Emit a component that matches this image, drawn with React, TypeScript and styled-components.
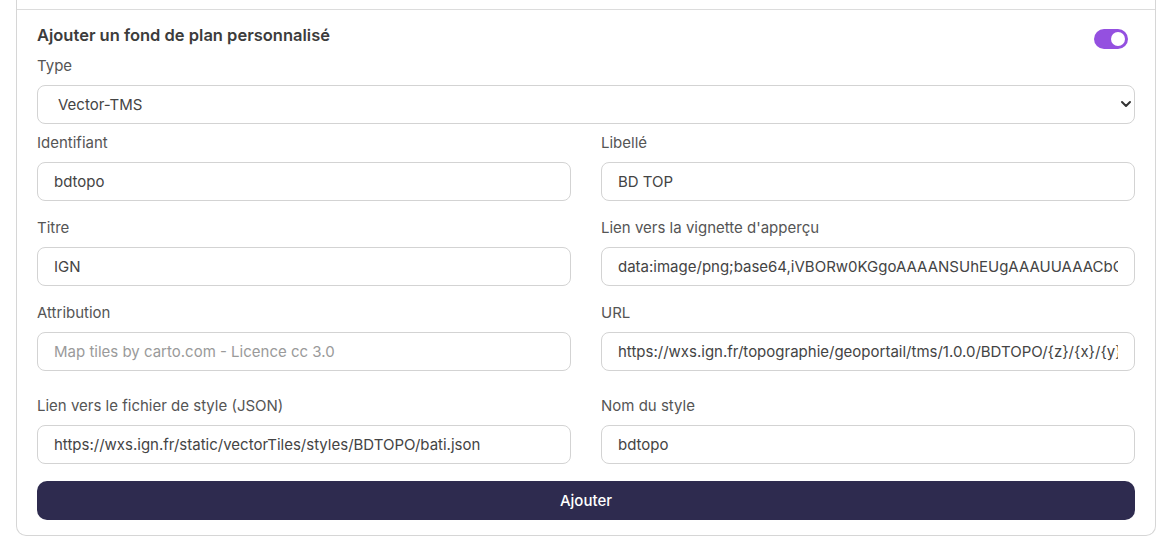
import React from 'react'
import styled, { createGlobalStyle } from 'styled-components'

const GlobalStyle = createGlobalStyle`
	html, body {
		margin: 0;
		padding: 0;
		background: #ffffff;
		font-family: Inter, 'Noto Sans', sans-serif;
	}
	* {
		box-sizing: border-box;
	}
`

const Page = styled.div`
	padding: 0 11px 10px 16px;
`

const Card = styled.div`
	border: 1px solid #d6d6d6;
	border-top: none;
	border-radius: 0 0 10px 10px;
`

const PreviousSection = styled.div`
	height: 10px;
	border-bottom: 1px solid #dcdcdc;
`

const Section = styled.form`
	padding: 14px 20px 15px 20px;
`

const Header = styled.div`
	display: flex;
	justify-content: space-between;
	align-items: flex-start;
	padding-right: 7px;
	margin-bottom: 6px;
`

const Title = styled.h2`
	margin: 0;
	font-size: 16.5px;
	font-weight: 600;
	color: #3c3c3c;
	line-height: 22px;
`

const Toggle = styled.button<{ $on: boolean }>`
	position: relative;
	width: 34px;
	height: 20px;
	border: none;
	border-radius: 10px;
	padding: 0;
	margin-top: 5px;
	background: ${p => (p.$on ? '#9450e0' : '#cccccc')};
	cursor: pointer;

	&::after {
		content: '';
		position: absolute;
		top: 3px;
		left: ${p => (p.$on ? '17px' : '3px')};
		width: 14px;
		height: 14px;
		border-radius: 50%;
		background: #ffffff;
	}
`

const Grid = styled.div`
	display: grid;
	grid-template-columns: 1fr 1fr;
	column-gap: 30px;
`

const Field = styled.div<{ $full?: boolean; $spaced?: boolean }>`
	display: flex;
	flex-direction: column;
	grid-column: ${p => (p.$full ? '1 / -1' : 'auto')};
	margin-top: ${p => (p.$spaced ? '8px' : '0')};
	margin-bottom: ${p => (p.$full ? '8px' : '16px')};
`

const Label = styled.label`
	font-size: 15px;
	line-height: 21px;
	color: #555555;
	margin-bottom: 9px;
`

const Input = styled.input`
	width: 100%;
	height: 39px;
	border: 1px solid #d3d3d3;
	border-radius: 8px;
	padding: 0 16px;
	font-family: inherit;
	font-size: 15px;
	color: #444444;
	background: #ffffff;
	outline: none;

	&::placeholder {
		color: #9a9a9a;
	}
`

const SelectWrap = styled.div`
	position: relative;
`

const Select = styled.select`
	width: 100%;
	height: 39px;
	border: 1px solid #d3d3d3;
	border-radius: 8px;
	padding: 0 20px;
	font-family: inherit;
	font-size: 15px;
	color: #444444;
	background: #ffffff;
	appearance: none;
	outline: none;
`

const Chevron = styled.svg`
	position: absolute;
	right: 3px;
	top: 14px;
	pointer-events: none;
`

const SubmitButton = styled.button`
	width: 100%;
	height: 39px;
	margin-top: 1px;
	border: none;
	border-radius: 10px;
	background: #2e2b4f;
	color: #ffffff;
	font-family: inherit;
	font-size: 15px;
	font-weight: 500;
	cursor: pointer;
`

const App = () => {
	const [enabled, setEnabled] = React.useState(true)

	return (
		<Page>
			<GlobalStyle />
			<Card>
				<PreviousSection />
				<Section onSubmit={event => event.preventDefault()}>
					<Header>
						<Title>Ajouter un fond de plan personnalisé</Title>
						<Toggle type='button' $on={enabled} onClick={() => setEnabled(!enabled)} />
					</Header>
					<Grid>
						<Field $full>
							<Label>Type</Label>
							<SelectWrap>
								<Select defaultValue='vector-tms'>
									<option value='wms'>WMS</option>
									<option value='wmts'>WMTS</option>
									<option value='tms'>TMS</option>
									<option value='vector-tms'>Vector-TMS</option>
								</Select>
								<Chevron width='12' height='10' viewBox='0 0 12 10'>
									<path d='M2 3 L6 7 L10 3' fill='none' stroke='#333' strokeWidth='2' strokeLinecap='round' strokeLinejoin='round' />
								</Chevron>
							</SelectWrap>
						</Field>
						<Field>
							<Label>Identifiant</Label>
							<Input defaultValue='bdtopo' />
						</Field>
						<Field>
							<Label>Libellé</Label>
							<Input defaultValue='BD TOP' />
						</Field>
						<Field>
							<Label>Titre</Label>
							<Input defaultValue='IGN' />
						</Field>
						<Field>
							<Label>Lien vers la vignette d'apperçu</Label>
							<Input defaultValue='data:image/png;base64,iVBORw0KGgoAAAANSUhEUgAAAUUAAACbCAYAAAD' />
						</Field>
						<Field>
							<Label>Attribution</Label>
							<Input placeholder='Map tiles by carto.com - Licence cc 3.0' />
						</Field>
						<Field>
							<Label>URL</Label>
							<Input defaultValue='https://wxs.ign.fr/topographie/geoportail/tms/1.0.0/BDTOPO/{z}/{x}/{y}.pbf' />
						</Field>
						<Field $spaced>
							<Label>Lien vers le fichier de style (JSON)</Label>
							<Input defaultValue='https://wxs.ign.fr/static/vectorTiles/styles/BDTOPO/bati.json' />
						</Field>
						<Field $spaced>
							<Label>Nom du style</Label>
							<Input defaultValue='bdtopo' />
						</Field>
					</Grid>
					<SubmitButton type='submit'>Ajouter</SubmitButton>
				</Section>
			</Card>
		</Page>
	)
}

export default App
